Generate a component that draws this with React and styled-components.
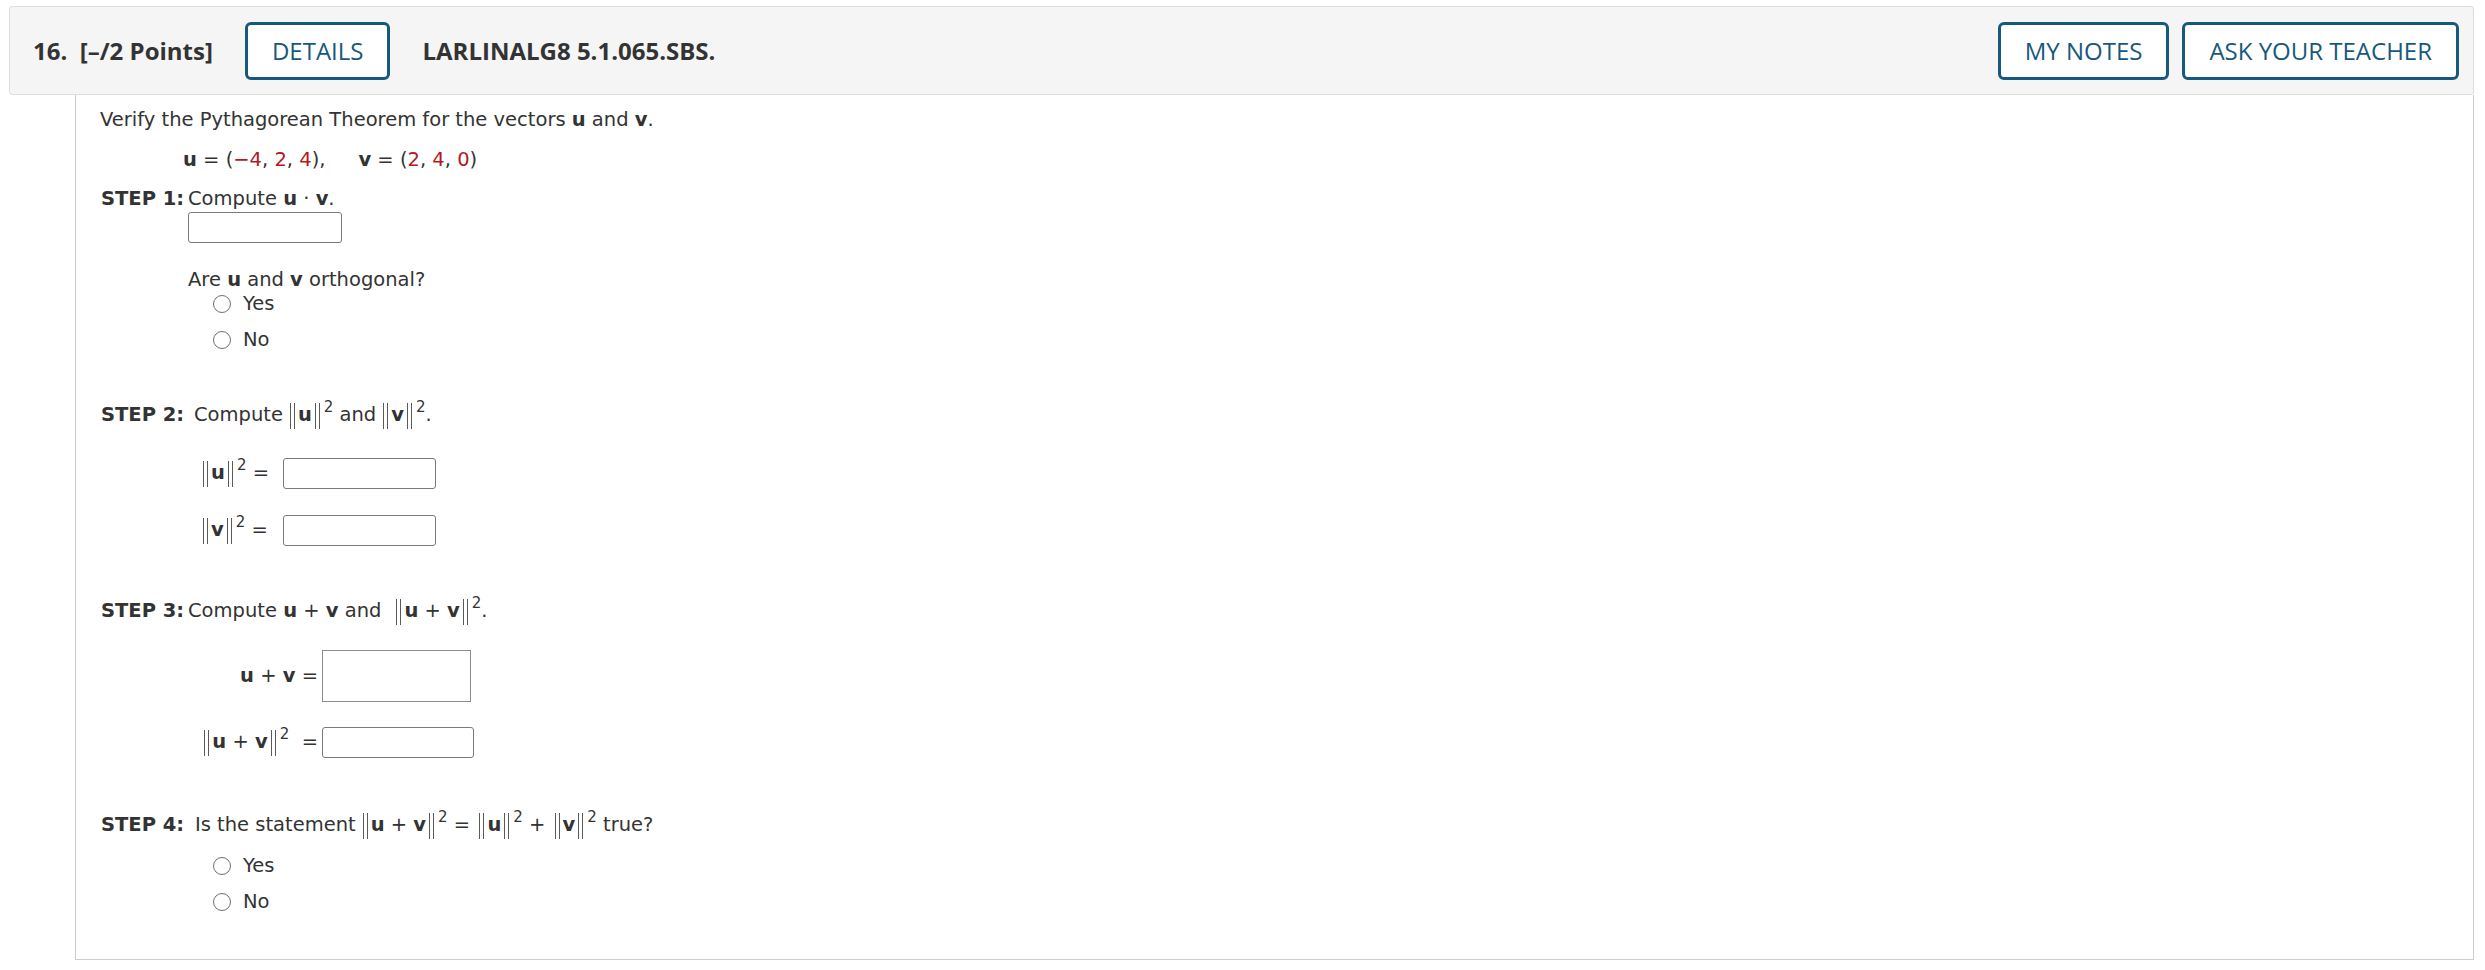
import styled, { createGlobalStyle } from "styled-components";

const GlobalStyle = createGlobalStyle`
   body {
      margin: 0;
      background: #ffffff;
   }
`;

const Page = styled.div`
   padding: 6px 11px 10px 9px;
`;

const Header = styled.div`
   display: flex;
   align-items: center;
   height: 89px;
   box-sizing: border-box;
   padding: 0 14px 0 23px;
   background-color: #f5f5f5;
   border: 1px solid #dedede;
   border-radius: 3px;
   font-family: "Open Sans", "Liberation Sans", sans-serif;
   font-size: 24px;
   color: #333333;
`;

const Title = styled.span`
   font-weight: 700;
   white-space: pre;
`;

const Code = styled.span`
   font-weight: 700;
   margin-left: 32px;
`;

const HeadButton = styled.button`
   display: inline-flex;
   align-items: center;
   height: 58px;
   box-sizing: border-box;
   padding: 0 24px;
   margin-left: ${(p) => p.$ml || 0}px;
   background-color: #ffffff;
   border: 3px solid #17597c;
   border-radius: 6px;
   color: #17597c;
   font-family: "Open Sans", "Liberation Sans", sans-serif;
   font-size: 24px;
   font-weight: 400;
   cursor: pointer;
`;

const HeadRight = styled.div`
   display: flex;
   gap: 13px;
   margin-left: auto;
`;

const Body = styled.div`
   margin-left: 66px;
   padding: 13px 24px 45px 24px;
   border: 1px solid #cccccc;
   border-top: none;
   font-family: "DejaVu Sans", Verdana, sans-serif;
   font-size: 19.5px;
   color: #333333;
`;

const Line = styled.div`
   height: 24px;
   line-height: 24px;
   white-space: pre;
   margin-top: ${(p) => p.$mt || 0}px;
   margin-left: ${(p) => p.$ml || 0}px;
`;

const StepHead = styled.div`
   display: flex;
   height: 24px;
   line-height: 24px;
   white-space: pre;
   margin-top: ${(p) => p.$mt || 0}px;
   margin-left: 1px;
`;

const StepLabel = styled.span`
   width: ${(p) => p.$w}px;
   flex-shrink: 0;
   font-weight: 700;
`;

const B = styled.b`
   font-weight: 700;
`;

const Red = styled.span`
   color: #b3191f;
`;

const Gap = styled.span`
   display: inline-block;
   width: ${(p) => p.$w}px;
`;

const Bars = styled.span`
   display: inline-block;
   width: 3px;
   height: 26px;
   margin: 0 3px;
   border-left: 1px solid #5a5a5a;
   border-right: 1px solid #5a5a5a;
   vertical-align: -8px;
`;

const Sup = styled.span`
   display: inline-block;
   margin-left: 1px;
   font-size: 15px;
   line-height: 0;
   font-weight: 400;
   vertical-align: 9px;
`;

const Field = styled.input`
   display: block;
   box-sizing: border-box;
   width: ${(p) => p.$w}px;
   height: ${(p) => p.$h || 31}px;
   margin: 0;
   padding: 0 6px;
   background: #ffffff;
   border: 1px solid ${(p) => (p.$square ? "#8c8c8c" : "#7a7a7a")};
   border-radius: ${(p) => (p.$square ? 0 : 3)}px;
   font-family: inherit;
   font-size: 18px;
`;

const FieldBox = styled.div`
   margin-top: ${(p) => p.$mt || 0}px;
   margin-left: ${(p) => p.$ml || 0}px;
`;

const FieldRow = styled.div`
   display: flex;
   align-items: center;
   margin-top: ${(p) => p.$mt || 0}px;
   margin-left: 100px;
`;

const FieldLabel = styled.span`
   width: ${(p) => p.$w}px;
   margin-right: ${(p) => p.$gap || 0}px;
   flex-shrink: 0;
   line-height: 24px;
   white-space: pre;
   text-align: ${(p) => (p.$right ? "right" : "left")};
`;

const RadioRow = styled.label`
   display: flex;
   align-items: center;
   gap: 12px;
   height: 24px;
   line-height: 24px;
   margin-top: ${(p) => p.$mt || 0}px;
   margin-left: 113px;
`;

const Radio = styled.input`
   appearance: none;
   width: 18px;
   height: 18px;
   margin: 0;
   background: #ffffff;
   border: 1px solid #6f6f6f;
   border-radius: 50%;
`;

function Norm({ children, ml }) {
   return (
      <>
         {ml ? <Gap $w={ml} /> : null}
         <Bars />
         {children}
         <Bars />
         <Sup>2</Sup>
      </>
   );
}

function Choice({ name, mt, children }) {
   return (
      <RadioRow $mt={mt}>
         <Radio type="radio" name={name} />
         <span>{children}</span>
      </RadioRow>
   );
}

export default function App() {
   return (
      <>
         <GlobalStyle />
         <Page>
            <Header>
               <Title>16.  [–/2 Points]</Title>
               <HeadButton $ml={32}>DETAILS</HeadButton>
               <Code>LARLINALG8 5.1.065.SBS.</Code>
               <HeadRight>
                  <HeadButton>MY NOTES</HeadButton>
                  <HeadButton>ASK YOUR TEACHER</HeadButton>
               </HeadRight>
            </Header>

            <Body>
               <Line>
                  Verify the Pythagorean Theorem for the vectors <B>u</B> and{" "}
                  <B>v</B>.
               </Line>
               <Line $mt={16} $ml={83}>
                  <B>u</B> = (<Red>−4</Red>, <Red>2</Red>, <Red>4</Red>),
                  <Gap $w={33} />
                  <B>v</B> = (<Red>2</Red>, <Red>4</Red>, <Red>0</Red>)
               </Line>

               <StepHead $mt={15}>
                  <StepLabel $w={87}>STEP 1:</StepLabel>
                  <span>
                     Compute <B>u</B> · <B>v</B>.
                  </span>
               </StepHead>
               <FieldBox $mt={1} $ml={88}>
                  <Field $w={154} />
               </FieldBox>
               <Line $mt={25} $ml={88}>
                  Are <B>u</B> and <B>v</B> orthogonal?
               </Line>
               <Choice name="q1">Yes</Choice>
               <Choice name="q1" mt={12}>
                  No
               </Choice>

               <StepHead $mt={51}>
                  <StepLabel $w={93}>STEP 2:</StepLabel>
                  <span>
                     Compute<Norm ml={4}><B>u</B></Norm> and
                     <Norm ml={4}><B>v</B></Norm>.
                  </span>
               </StepHead>
               <FieldRow $mt={31}>
                  <FieldLabel $w={83}>
                     <Norm><B>u</B></Norm> =
                  </FieldLabel>
                  <Field $w={153} />
               </FieldRow>
               <FieldRow $mt={26}>
                  <FieldLabel $w={83}>
                     <Norm><B>v</B></Norm> =
                  </FieldLabel>
                  <Field $w={153} />
               </FieldRow>

               <StepHead $mt={53}>
                  <StepLabel $w={87}>STEP 3:</StepLabel>
                  <span>
                     Compute <B>u</B> + <B>v</B> and
                     <Norm ml={12}>
                        <B>u</B> + <B>v</B>
                     </Norm>
                     .
                  </span>
               </StepHead>
               <FieldRow $mt={27}>
                  <FieldLabel $w={118} $gap={4} $right>
                     <B>u</B> + <B>v</B> =
                  </FieldLabel>
                  <Field $w={149} $h={52} $square />
               </FieldRow>
               <FieldRow $mt={25}>
                  <FieldLabel $w={118} $gap={4} $right>
                     <Norm>
                        <B>u</B> + <B>v</B>
                     </Norm>
                     {"  "}=
                  </FieldLabel>
                  <Field $w={152} />
               </FieldRow>

               <StepHead $mt={55}>
                  <StepLabel $w={94}>STEP 4:</StepLabel>
                  <span>
                     Is the statement
                     <Norm ml={4}>
                        <B>u</B> + <B>v</B>
                     </Norm>{" "}
                     = <Norm><B>u</B></Norm> + <Norm><B>v</B></Norm> true?
                  </span>
               </StepHead>
               <Choice name="q4" mt={17}>
                  Yes
               </Choice>
               <Choice name="q4" mt={12}>
                  No
               </Choice>
            </Body>
         </Page>
      </>
   );
}
